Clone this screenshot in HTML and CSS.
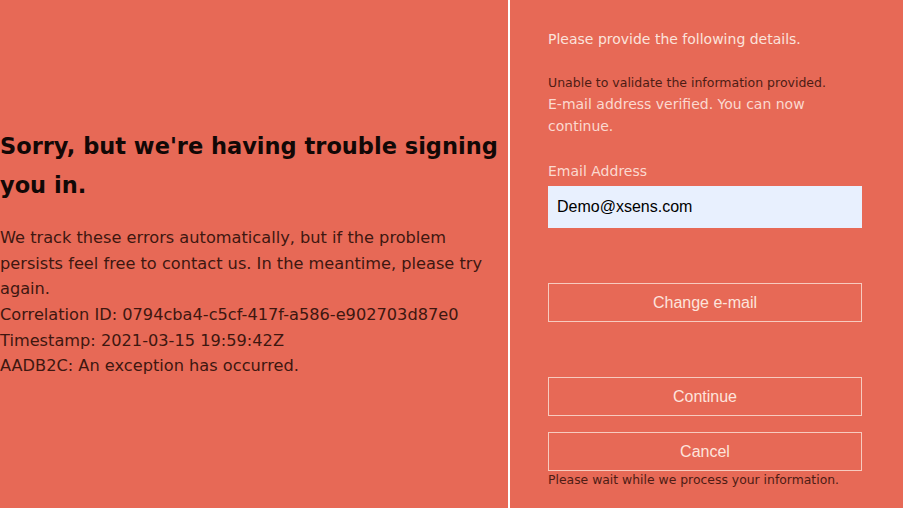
FILE: index.html
```html
<!DOCTYPE html>
<html lang="en">
<head>
<meta charset="utf-8">
<title>Sign in error</title>
<link rel="stylesheet" href="styles.css">
</head>
<body>
<div class="page">
  <section class="error-pane">
    <div class="error-block">
      <h2 class="error-title">Sorry, but we're having trouble signing you in.</h2>
      <p class="error-text">We track these errors automatically, but if the problem persists feel free to contact us. In the meantime, please try again.</p>
      <p class="error-text">Correlation ID: 0794cba4-c5cf-417f-a586-e902703d87e0</p>
      <p class="error-text">Timestamp: 2021-03-15 19:59:42Z</p>
      <p class="error-text">AADB2C: An exception has occurred.</p>
    </div>
  </section>
  <div class="divider"></div>
  <section class="form-pane">
    <p class="intro">Please provide the following details.</p>
    <p class="error-msg">Unable to validate the information provided.</p>
    <p class="success-msg">E-mail address verified. You can now continue.</p>
    <label class="field-label" for="email">Email Address</label>
    <input id="email" class="field-input" type="text" value="Demo@xsens.com">
    <button class="btn btn-change">Change e-mail</button>
    <button class="btn btn-continue">Continue</button>
    <button class="btn btn-cancel">Cancel</button>
    <p class="wait-msg">Please wait while we process your information.</p>
  </section>
</div>
</body>
</html>
```

FILE: styles.css
```css
* { box-sizing: border-box; }
html, body {
  margin: 0;
  padding: 0;
  height: 100%;
}
body {
  background: #e76956;
  font-family: "DejaVu Sans", sans-serif;
  overflow: hidden;
}
.page {
  display: flex;
  height: 508px;
}
.error-pane {
  width: 508px;
  flex: none;
  display: flex;
  align-items: center;
}
.error-block {
  width: 504px;
  padding-bottom: 2px;
}
.error-title {
  margin: 0 0 20px;
  font-size: 22.5px;
  line-height: 39px;
  font-weight: bold;
  color: #120806;
}
.error-text {
  margin: 0;
  font-size: 16.2px;
  line-height: 25.6px;
  color: #3e1710;
}
.divider {
  width: 2px;
  flex: none;
  background: #ffffff;
}
.form-pane {
  flex: 1;
  padding: 29px 0 0 38px;
  display: flex;
  flex-direction: column;
  align-items: flex-start;
}
.form-pane p { margin: 0; }
.intro {
  font-size: 14px;
  line-height: 20px;
  color: #fbe3dc;
}
.error-msg {
  margin-top: 24px !important;
  font-size: 12.5px;
  line-height: 20px;
  color: #4e1c14;
}
.success-msg {
  width: 314px;
  font-size: 14px;
  line-height: 22px;
  color: #fbd9d0;
}
.field-label {
  margin-top: 24px;
  font-size: 14px;
  line-height: 20px;
  color: #fbd9d0;
}
.field-input {
  margin-top: 5px;
  width: 314px;
  height: 42px;
  border: none;
  background: #e8f0fe;
  padding: 0 9px;
  font-family: "Liberation Sans", Arial, sans-serif;
  font-size: 16px;
  color: #000;
  outline: none;
}
.btn {
  width: 314px;
  height: 39px;
  background: transparent;
  border: 1px solid #f7cbbf;
  color: #fde4dc;
  font-family: "Liberation Sans", Arial, sans-serif;
  font-size: 16px;
  padding: 0;
}
.btn-change { margin-top: 55px; }
.btn-continue { margin-top: 55px; }
.btn-cancel { margin-top: 16px; }
.wait-msg {
  margin-top: 2px;
  font-size: 12.4px;
  line-height: 18px;
  color: #4e1c14;
}
```
